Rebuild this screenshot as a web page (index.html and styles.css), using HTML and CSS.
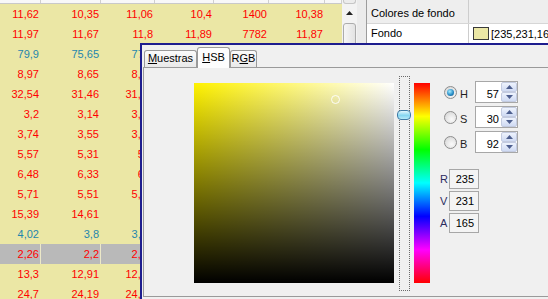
FILE: index.html
```html
<!DOCTYPE html>
<html lang="es">
<head>
<meta charset="utf-8">
<title>Selector de color</title>
<link rel="stylesheet" href="styles.css">
</head>
<body>
<div class="screen">
  <div class="grid-area">
    <div class="table">
      <div class="thead"><div></div><div></div><div></div><div></div><div></div><div></div><div></div></div>
      <div class="row"><div>11,62</div><div>10,35</div><div>11,06</div><div>10,4</div><div>1400</div><div>10,38</div><div></div></div>
      <div class="row"><div>11,97</div><div>11,67</div><div>11,8</div><div>11,89</div><div>7782</div><div>11,87</div><div></div></div>
      <div class="row t"><div>79,9</div><div>75,65</div><div>77,8</div><div></div><div></div><div></div><div></div></div>
      <div class="row"><div>8,97</div><div>8,65</div><div>8,66</div><div></div><div></div><div></div><div></div></div>
      <div class="row"><div>32,54</div><div>31,46</div><div>31,28</div><div></div><div></div><div></div><div></div></div>
      <div class="row"><div>3,2</div><div>3,14</div><div>3,17</div><div></div><div></div><div></div><div></div></div>
      <div class="row"><div>3,74</div><div>3,55</div><div>3,59</div><div></div><div></div><div></div><div></div></div>
      <div class="row"><div>5,57</div><div>5,31</div><div>5,2</div><div></div><div></div><div></div><div></div></div>
      <div class="row"><div>6,48</div><div>6,33</div><div>6,3</div><div></div><div></div><div></div><div></div></div>
      <div class="row"><div>5,71</div><div>5,51</div><div>5,52</div><div></div><div></div><div></div><div></div></div>
      <div class="row"><div>15,39</div><div>14,61</div><div></div><div></div><div></div><div></div><div></div></div>
      <div class="row t"><div>4,02</div><div>3,8</div><div>3,81</div><div></div><div></div><div></div><div></div></div>
      <div class="row sel"><div>2,26</div><div>2,2</div><div>2,21</div><div></div><div></div><div></div><div></div></div>
      <div class="row"><div>13,3</div><div>12,91</div><div>12,94</div><div></div><div></div><div></div><div></div></div>
      <div class="row"><div>24,7</div><div>24,19</div><div>24,28</div><div></div><div></div><div></div><div></div></div>
    </div>
    <div class="vscroll">
      <div class="sb-cap"></div>
      <div class="sb-up"><svg width="7" height="4" viewBox="0 0 7 4"><path d="M0 4 L3.5 0 L7 4 Z" fill="#222"/></svg></div>
      <div class="sb-thumb"></div>
    </div>
  </div>

  <div class="props">
    <div class="splitter"></div>
    <div class="ptable">
      <div class="prow head"><div class="pk">Colores de fondo</div><div class="pv"></div></div>
      <div class="prow val"><div class="pk">Fondo</div><div class="pv"><span class="swatch"></span><span class="ptext">[235,231,165]</span></div></div>
    </div>
  </div>

  <div class="dialog">
    <div class="tabs">
      <div class="tab t-muestras"><u>M</u>uestras</div>
      <div class="tab t-hsb active"><u>H</u>SB</div>
      <div class="tab t-rgb">R<u>G</u>B</div>
    </div>
    <div class="pane">
      <div class="square"><div class="pick"></div></div>
      <div class="hue-slider"><div class="hue-thumb"></div></div>
      <div class="hue-bar"></div>
      <div class="controls">
        <div class="hrow">
          <span class="radio on"></span><span class="lbl">H</span>
          <div class="spin"><span class="val">57</span><span class="btns"><span class="sbtn"><svg width="7" height="4" viewBox="0 0 7 4"><path d="M0 4 L3.5 0 L7 4 Z" fill="#4d5f8f"/></svg></span><span class="sbtn"><svg width="7" height="4" viewBox="0 0 7 4"><path d="M0 0 L3.5 4 L7 0 Z" fill="#4d5f8f"/></svg></span></span></div>
        </div>
        <div class="hrow">
          <span class="radio"></span><span class="lbl">S</span>
          <div class="spin"><span class="val">30</span><span class="btns"><span class="sbtn"><svg width="7" height="4" viewBox="0 0 7 4"><path d="M0 4 L3.5 0 L7 4 Z" fill="#4d5f8f"/></svg></span><span class="sbtn"><svg width="7" height="4" viewBox="0 0 7 4"><path d="M0 0 L3.5 4 L7 0 Z" fill="#4d5f8f"/></svg></span></span></div>
        </div>
        <div class="hrow">
          <span class="radio"></span><span class="lbl">B</span>
          <div class="spin"><span class="val">92</span><span class="btns"><span class="sbtn"><svg width="7" height="4" viewBox="0 0 7 4"><path d="M0 4 L3.5 0 L7 4 Z" fill="#4d5f8f"/></svg></span><span class="sbtn"><svg width="7" height="4" viewBox="0 0 7 4"><path d="M0 0 L3.5 4 L7 0 Z" fill="#4d5f8f"/></svg></span></span></div>
        </div>
        <div class="rgb-block">
          <div class="crow"><span class="clbl">R</span><span class="cbox">235</span></div>
          <div class="crow"><span class="clbl">V</span><span class="cbox">231</span></div>
          <div class="crow"><span class="clbl">A</span><span class="cbox">165</span></div>
        </div>
      </div>
    </div>
  </div>
</div>
</body>
</html>
```

FILE: styles.css
```css
* { box-sizing: border-box; margin: 0; padding: 0; }
html, body { width: 548px; height: 299px; overflow: hidden; }
body {
  font-family: "Liberation Sans", Arial, sans-serif;
  font-size: 11px;
  color: #000;
  background: #f0f0f0;
}
.screen { position: relative; width: 548px; height: 299px; display: flex; overflow: hidden; }

/* background table */
.grid-area { display: flex; width: 357px; height: 299px; flex: none; }
.table { width: 342px; height: 299px; background: #ebe7a5; overflow: hidden; }
.thead, .row { display: grid; grid-template-columns: 41px 60px 54px 59px 55px 56px 17px; }
.thead { height: 4px; background: #f8f8f8; border-bottom: 1px solid #c9c9c9; }
.thead div { border-right: 1px solid #cfcfcf; }
.row { height: 20px; }
.row div {
  border-right: 1px solid #ebe7a5;
  text-align: right;
  padding-right: 1px;
  line-height: 21px;
  color: #ff0000;
  white-space: nowrap;
  overflow: hidden;
}
.row.t div { color: #1f86ad; }
.row.sel { background: #b9b9b9; }
.row.sel div { border-right-color: #ece8c8; }

.vscroll { width: 15px; background: #f3f3f3; display: flex; flex-direction: column; align-items: center; }
.sb-cap { width: 13px; height: 4px; border: 1px solid #c6c6c6; border-top: none; border-radius: 0 0 3px 3px; background: #ececec; }
.sb-up { height: 18px; width: 15px; display: flex; align-items: center; justify-content: center; }
.sb-thumb {
  width: 13px; height: 40px; margin-top: 1px;
  border: 1px solid #acacac; border-radius: 3px;
  background: linear-gradient(to right, #f6f6f6, #e3e3e3);
}

/* property panel */
.props { flex: 1; display: flex; height: 44px; }
.splitter { width: 10px; background: #ebebeb; border-right: 1px solid #9c9c9c; }
.ptable { flex: 1; }
.prow { display: flex; }
.prow.head { height: 24px; background: #eeeeee; border-bottom: 1px solid #d6d6d6; }
.prow.head .pk { padding-top: 3px; line-height: 20px; }
.prow.val { height: 19px; background: #fff; }
.prow.val .pk { line-height: 19px; }
.pk { width: 102px; flex: none; padding-left: 4px; border-right: 1px solid #cdcdcd; white-space: nowrap; }
.pv { flex: 1; display: flex; align-items: center; padding-left: 4px; white-space: nowrap; overflow: hidden; }
.swatch { width: 16px; height: 13px; flex: none; border: 1px solid #3a3a3a; background: #ebe7a5; }
.ptext { margin-left: 2px; }

/* dialog */
.dialog {
  position: absolute; left: 140px; top: 43px;
  width: 420px; height: 270px;
  border: 2px solid #1d1d8e;
  background: #f0f0f0;
}
.tabs { display: flex; align-items: flex-end; height: 22px; padding-left: 2px; }
.tab {
  border: 1px solid #9a9a9a; border-bottom: none;
  border-radius: 3px 3px 0 0;
  background: linear-gradient(#fbfbfb, #e9e9e9);
  text-align: center;
  height: 17px; line-height: 15px;
  white-space: nowrap;
}
.tab u { text-decoration: underline; text-underline-offset: 1px; }
.t-muestras { width: 53px; }
.t-rgb { width: 27px; }
.tab.active {
  width: 33px; height: 21px; margin-bottom: -1px;
  background: #fdfdfd; position: relative; z-index: 1;
  padding-top: 1px; line-height: 16px;
}
.pane {
  margin-left: 1px; height: 230px;
  border: 1px solid #9a9a9a;
  background: #f0f0f0;
  display: flex; align-items: flex-start;
  padding: 15px 0 0 50px;
}
.square {
  position: relative; width: 200px; height: 200px; flex: none;
  background:
    linear-gradient(to bottom, rgba(0,0,0,0), #000),
    linear-gradient(to right, rgb(255,242,0), #fff);
}
.pick {
  position: absolute; left: 137px; top: 12px; width: 9px; height: 9px;
  border: 1px solid rgba(255,255,255,0.9); border-radius: 50%;
}
.hue-slider {
  position: relative; flex: none;
  width: 11px; height: 215px; margin: -7px 0 0 5px;
  border: 1px dotted #6a6a6a;
}
.hue-thumb {
  position: absolute; left: -3px; top: 33px; width: 14px; height: 10px;
  border: 1px solid #3f7aa6; border-radius: 4px;
  background: linear-gradient(#e2f7fe, #86d6f1 55%, #b5e9f9);
}
.hue-bar {
  width: 16px; height: 200px; flex: none; margin-left: 4px;
  background: linear-gradient(to bottom, #f00 0%, #ff0 16.67%, #0f0 33.33%, #0ff 50%, #00f 66.67%, #f0f 83.33%, #f00 100%);
}
.controls { margin: -2px 0 0 10px; width: 80px; }
.hrow { display: flex; align-items: center; height: 22px; margin-bottom: 3px; }
.radio {
  width: 13px; height: 13px; margin-left: 4px; flex: none;
  border: 1px solid #8d8d8d; border-radius: 50%;
  background: radial-gradient(circle at 60% 65%, #fafafa 0%, #e4e4e4 55%, #cfcfcf 100%);
  display: flex; align-items: center; justify-content: center;
}
.radio.on::after {
  content: ""; width: 7px; height: 7px; border-radius: 50%;
  background: radial-gradient(circle at 40% 35%, #a6ecff 0%, #2a8fc8 55%, #0c4a7a 100%);
}
.lbl { width: 15px; margin-left: 3px; padding-top: 4px; color: #1e1e1e; }
.spin {
  width: 43px; height: 22px; flex: none;
  border: 1px solid #a7a7a7; background: #fff;
  display: flex;
}
.spin .val { flex: 1; text-align: right; padding: 4px 2px 0 0; line-height: 16px; }
.btns { width: 16px; display: flex; flex-direction: column; }
.sbtn {
  height: 10px; display: flex; align-items: center; justify-content: center;
  border: 1px solid #c3cbe0; border-radius: 2px;
  background: linear-gradient(#eef3fd, #cfdaf3);
}
.rgb-block { margin-top: 16px; }
.crow { display: flex; align-items: center; height: 20px; margin-bottom: 2px; }
.clbl { width: 9px; color: #2b2b5e; }
.cbox {
  width: 30px; height: 20px; border: 1px solid #a7a7a7; background: #f4f4f4;
  text-align: right; padding-right: 4px; line-height: 18px;
}
```
